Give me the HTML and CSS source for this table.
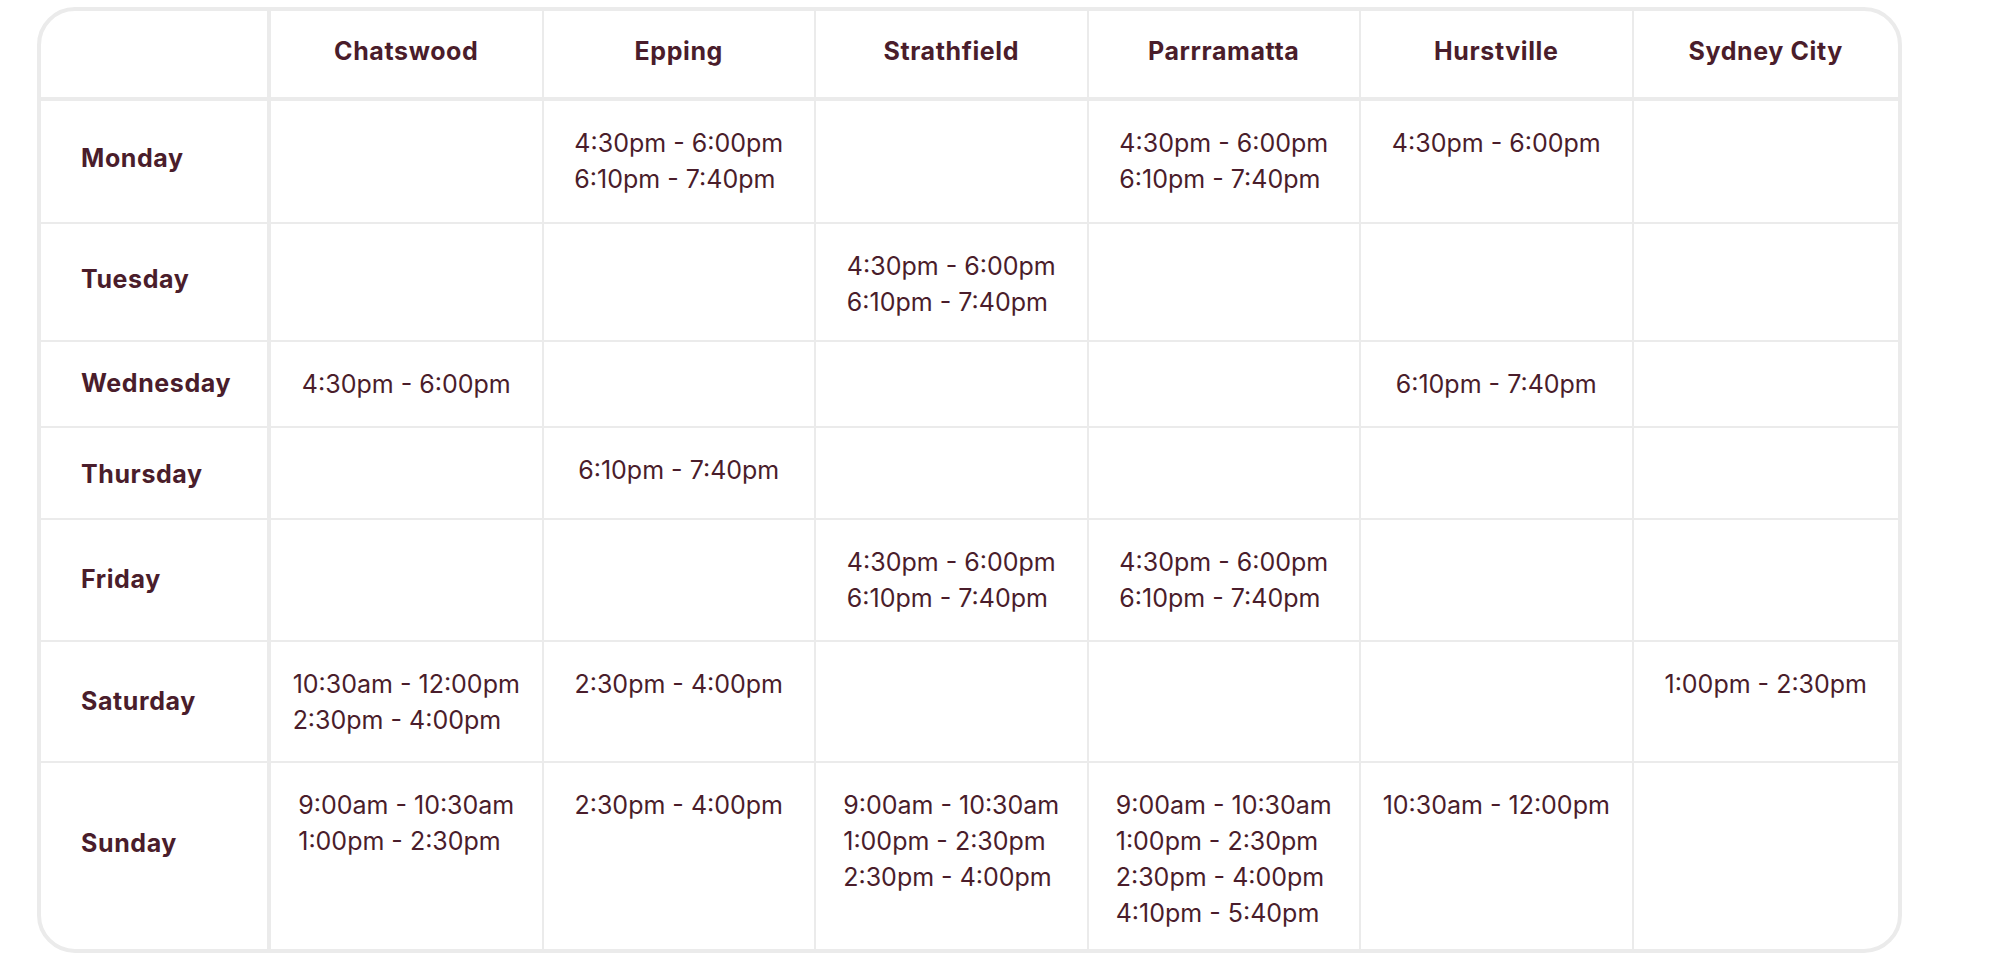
FILE: index.html
```html
<!DOCTYPE html>
<html lang="en">
<head>
<meta charset="utf-8">
<title>Class timetable</title>
<link rel="stylesheet" href="styles.css">
</head>
<body>
<div class="page">
  <div class="schedule">
    <div class="cell head corner"></div>
    <div class="cell head">Chatswood</div>
    <div class="cell head">Epping</div>
    <div class="cell head">Strathfield</div>
    <div class="cell head">Parrramatta</div>
    <div class="cell head">Hurstville</div>
    <div class="cell head last-col">Sydney City</div>

    <div class="cell day day-up">Monday</div>
    <div class="cell slot"></div>
    <div class="cell slot"><div class="times"><span>4:30pm - 6:00pm</span><span>6:10pm - 7:40pm</span></div></div>
    <div class="cell slot"></div>
    <div class="cell slot"><div class="times"><span>4:30pm - 6:00pm</span><span>6:10pm - 7:40pm</span></div></div>
    <div class="cell slot"><div class="times"><span>4:30pm - 6:00pm</span></div></div>
    <div class="cell slot last-col"></div>

    <div class="cell day day-up">Tuesday</div>
    <div class="cell slot"></div>
    <div class="cell slot"></div>
    <div class="cell slot"><div class="times"><span>4:30pm - 6:00pm</span><span>6:10pm - 7:40pm</span></div></div>
    <div class="cell slot"></div>
    <div class="cell slot"></div>
    <div class="cell slot last-col"></div>

    <div class="cell day">Wednesday</div>
    <div class="cell slot"><div class="times"><span>4:30pm - 6:00pm</span></div></div>
    <div class="cell slot"></div>
    <div class="cell slot"></div>
    <div class="cell slot"></div>
    <div class="cell slot"><div class="times"><span>6:10pm - 7:40pm</span></div></div>
    <div class="cell slot last-col"></div>

    <div class="cell day day-down">Thursday</div>
    <div class="cell slot"></div>
    <div class="cell slot"><div class="times"><span>6:10pm - 7:40pm</span></div></div>
    <div class="cell slot"></div>
    <div class="cell slot"></div>
    <div class="cell slot"></div>
    <div class="cell slot last-col"></div>

    <div class="cell day">Friday</div>
    <div class="cell slot"></div>
    <div class="cell slot"></div>
    <div class="cell slot"><div class="times"><span>4:30pm - 6:00pm</span><span>6:10pm - 7:40pm</span></div></div>
    <div class="cell slot"><div class="times"><span>4:30pm - 6:00pm</span><span>6:10pm - 7:40pm</span></div></div>
    <div class="cell slot"></div>
    <div class="cell slot last-col"></div>

    <div class="cell day">Saturday</div>
    <div class="cell slot"><div class="times"><span>10:30am - 12:00pm</span><span>2:30pm - 4:00pm</span></div></div>
    <div class="cell slot"><div class="times"><span>2:30pm - 4:00pm</span></div></div>
    <div class="cell slot"></div>
    <div class="cell slot"></div>
    <div class="cell slot"></div>
    <div class="cell slot last-col"><div class="times"><span>1:00pm - 2:30pm</span></div></div>

    <div class="cell day day-sun last-row">Sunday</div>
    <div class="cell slot last-row"><div class="times"><span>9:00am - 10:30am</span><span>1:00pm - 2:30pm</span></div></div>
    <div class="cell slot last-row"><div class="times"><span>2:30pm - 4:00pm</span></div></div>
    <div class="cell slot last-row"><div class="times"><span>9:00am - 10:30am</span><span>1:00pm - 2:30pm</span><span>2:30pm - 4:00pm</span></div></div>
    <div class="cell slot last-row"><div class="times"><span>9:00am - 10:30am</span><span>1:00pm - 2:30pm</span><span>2:30pm - 4:00pm</span><span>4:10pm - 5:40pm</span></div></div>
    <div class="cell slot last-row"><div class="times"><span>10:30am - 12:00pm</span></div></div>
    <div class="cell slot last-row last-col"></div>
  </div>
</div>
</body>
</html>
```
FILE: styles.css
```css
* { box-sizing: border-box; }

html, body {
  margin: 0;
  padding: 0;
  background: #ffffff;
}

body {
  font-family: Inter, "Noto Sans", "Liberation Sans", sans-serif;
  color: #4a1d2b;
  font-size: 25px;
  line-height: 36px;
}

.page {
  padding: 7px 0 0 37px;
}

.schedule {
  width: 1865px;
  display: grid;
  grid-template-columns: 230px repeat(5, 272.5px) 1fr;
  grid-template-rows: 90px 123px 118px 86px 92px 122px 121px 186px;
  border: 4px solid #ebebeb;
  border-radius: 38px;
  overflow: hidden;
}

.cell {
  border-right: 2px solid #ebebeb;
  border-bottom: 2px solid #ebebeb;
}

.cell.last-col { border-right: none; }
.cell.last-row { border-bottom: none; }

.head {
  border-bottom-width: 4px;
  font-weight: 700;
  letter-spacing: 0.6px;
  display: flex;
  justify-content: center;
  padding-top: 22px;
}

.corner, .day {
  border-right-width: 4px;
}

.day {
  font-weight: 700;
  letter-spacing: 0.6px;
  display: flex;
  align-items: center;
  padding-left: 40px;
  padding-bottom: 2px;
}

.day-up { padding-bottom: 7px; }
.day-down { padding-bottom: 0; padding-top: 2px; }
.day-sun { padding-bottom: 26px; }

.slot {
  display: flex;
  justify-content: center;
  padding-top: 24px;
}

.times {
  display: flex;
  flex-direction: column;
  align-items: flex-start;
}
```
